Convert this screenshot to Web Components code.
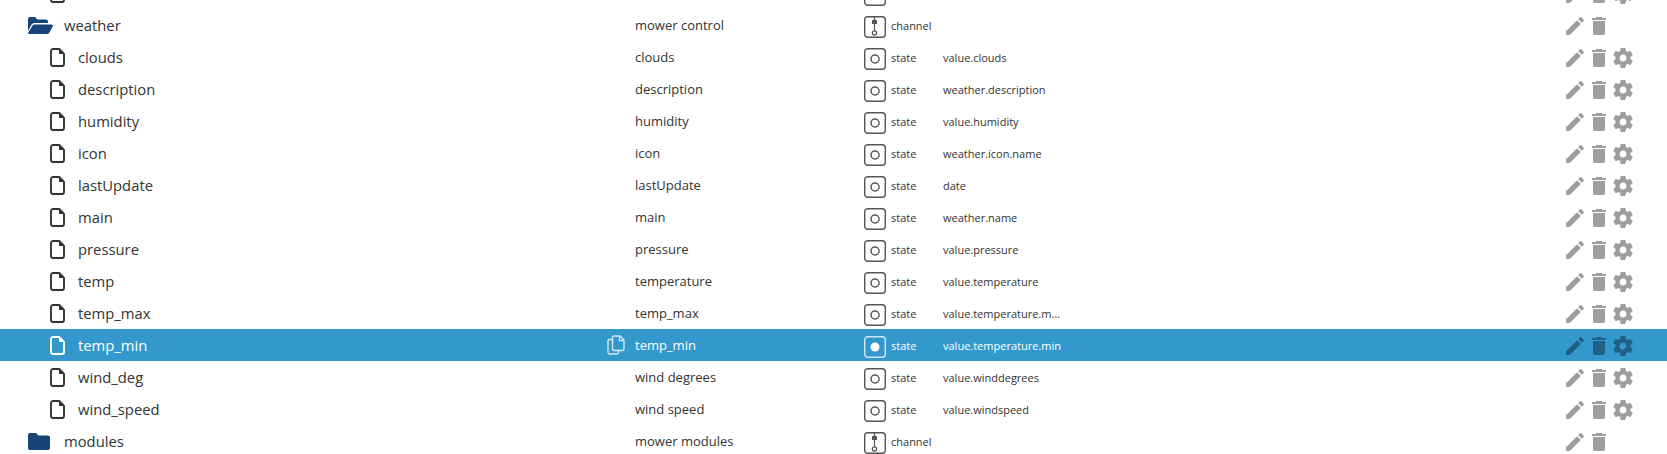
<!DOCTYPE html>
<html><head><meta charset="utf-8">
<style>
html,body{margin:0;padding:0;background:#fff;height:454px;overflow:hidden}
body{font-family:"Open Sans","Noto Sans",sans-serif}
obj-tree{display:block;margin-top:-23px}
</style></head><body>
<obj-tree>
<obj-row kind="file" type="state" short></obj-row>
<obj-row kind="open" label="weather" name="mower control" type="channel"></obj-row>
<obj-row kind="file" label="clouds" name="clouds" type="state" role="value.clouds"></obj-row>
<obj-row kind="file" label="description" name="description" type="state" role="weather.description"></obj-row>
<obj-row kind="file" label="humidity" name="humidity" type="state" role="value.humidity"></obj-row>
<obj-row kind="file" label="icon" name="icon" type="state" role="weather.icon.name"></obj-row>
<obj-row kind="file" label="lastUpdate" name="lastUpdate" type="state" role="date"></obj-row>
<obj-row kind="file" label="main" name="main" type="state" role="weather.name"></obj-row>
<obj-row kind="file" label="pressure" name="pressure" type="state" role="value.pressure"></obj-row>
<obj-row kind="file" label="temp" name="temperature" type="state" role="value.temperature"></obj-row>
<obj-row kind="file" label="temp_max" name="temp_max" type="state" role="value.temperature.max"></obj-row>
<obj-row kind="file" label="temp_min" name="temp_min" type="state" role="value.temperature.min" selected></obj-row>
<obj-row kind="file" label="wind_deg" name="wind degrees" type="state" role="value.winddegrees"></obj-row>
<obj-row kind="file" label="wind_speed" name="wind speed" type="state" role="value.windspeed"></obj-row>
<obj-row kind="closed" label="modules" name="mower modules" type="channel"></obj-row>
</obj-tree>
<script>
const ICONS={
 file:`<svg width="15" height="19" viewBox="0 0 15 19"><path d="M3 1H9.2L14 5.8V16a2 2 0 0 1-2 2H3a2 2 0 0 1-2-2V3a2 2 0 0 1 2-2Z" fill="none" stroke="currentColor" stroke-width="1.9"/><path d="M9 1V6H14Z" fill="currentColor"/></svg>`,
 open:`<svg width="25" height="17" viewBox="0 0 25 17"><path d="M0 14V2a2 2 0 0 1 2-2h5l2.5 2.5H18a2 2 0 0 1 2 2V6H6.5A3.5 3.5 0 0 0 3.3 8Z" fill="currentColor"/><path d="M1 17a1 1 0 0 1-.6-1.5L4.6 8.6A2 2 0 0 1 6.4 7.600H23.500a1.300 1.300 0 0 1 1.200 2l-3.600 6.300A2 2 0 0 1 19.300 17Z" fill="currentColor"/></svg>`,
 closed:`<svg width="22" height="17" viewBox="0 0 22 17"><path d="M0 2a2 2 0 0 1 2-2h6l2.500 2.500H20a2 2 0 0 1 2 2V15a2 2 0 0 1-2 2H2a2 2 0 0 1-2-2Z" fill="currentColor"/></svg>`,
 edit:`<svg width="24" height="24" viewBox="0 0 24 24"><path fill="currentColor" d="M3 17.25V21h3.75L17.81 9.94l-3.75-3.75L3 17.25zM20.71 7.04c.39-.39.39-1.020 0-1.410l-2.340-2.340c-.39-.39-1.020-.39-1.410 0l-1.830 1.830 3.750 3.750 1.830-1.830z"/></svg>`,
 del:`<svg width="24" height="24" viewBox="0 0 24 24"><path fill="currentColor" d="M6 19c0 1.100.9 2 2 2h8c1.100 0 2-.9 2-2V7H6v12zM19 4h-3.500l-1-1h-5l-1 1H5v2h14V4z"/></svg>`,
 gear:`<svg width="24" height="24" viewBox="0 0 24 24"><path fill="currentColor" d="M19.430 12.980c.04-.32.07-.64.07-.98s-.03-.66-.07-.98l2.110-1.650c.19-.15.24-.42.12-.64l-2-3.460c-.12-.22-.39-.3-.61-.22l-2.490 1c-.52-.4-1.080-.73-1.690-.98l-.38-2.650C14.460 2.180 14.250 2 14 2h-4c-.25 0-.46.18-.49.42l-.38 2.650c-.61.25-1.170.59-1.690.98l-2.490-1c-.23-.09-.49 0-.61.22l-2 3.460c-.13.22-.07.49.12.64l2.110 1.650c-.04.32-.07.65-.07.98s.03.66.07.98l-2.110 1.650c-.19.15-.24.42-.12.64l2 3.460c.12.22.39.3.61.22l2.490-1c.52.4 1.080.73 1.690.98l.38 2.650c.03.24.24.42.49.42h4c.25 0 .46-.18.49-.42l.38-2.650c.61-.25 1.170-.59 1.690-.98l2.490 1c.23.09.49 0 .61-.22l2-3.460c.12-.22.07-.49-.12-.64l-2.110-1.650zM12 15.500c-1.930 0-3.500-1.570-3.500-3.500s1.570-3.500 3.500-3.500 3.500 1.570 3.500 3.500-1.570 3.500-3.500 3.500z"/></svg>`,
 copy:`<svg width="18" height="20" viewBox="0 0 18 20" fill="none" stroke="currentColor" stroke-width="1.300"><path d="M7 1h6l4 4v9a1.500 1.500 0 0 1-1.500 1.500H7A1.500 1.500 0 0 1 5.500 14V2.500A1.500 1.500 0 0 1 7 1Z"/><path d="M12.500 1v4.500H17"/><path d="M5.500 4.500H2.500A1.500 1.500 0 0 0 1 6v11.500A1.500 1.500 0 0 0 2.500 19H10a1.500 1.500 0 0 0 1.500-1.500v-2"/></svg>`
};
const tpl=document.createElement('template');
tpl.innerHTML=`<style>
:host{display:grid;grid-template-columns:607px 28px 229px 27px 52px 120px 1fr 104px;align-items:center;height:32px;color:#333}
:host([selected]){background:#39c;color:#fff}
.tree{display:flex;align-items:center;min-width:0}
:host([kind=file]) .tree{padding-left:50px}
:host(:not([kind=file])) .tree{padding-left:28px}
.ticon{display:flex;flex:none;color:#333}
:host([kind=open]) .ticon,:host([kind=closed]) .ticon{color:#164477}
:host([selected]) .ticon{color:#fff}
.label{font-size:14.800px;white-space:nowrap;color:#333}
:host([kind=file]) .label{margin-left:13px}
:host([kind=open]) .label{margin-left:11px}
:host([kind=closed]) .label{margin-left:14px}
:host([selected]) .label{color:#fff}
.copy{display:none;color:#d6ebf5}
:host([selected]) .copy{display:flex}
.name{font-size:13px;white-space:nowrap}
.tbox{width:22px;height:22px;display:block;color:#555;margin-top:4px}
:host([selected]) .tbox{color:#cfe6f2}
.type{font-size:11px;white-space:nowrap;margin-top:1px}
.role{font-size:11px;white-space:nowrap;overflow:hidden;text-overflow:ellipsis;margin-top:1px}
.actions{display:flex;color:#9e9e9e;margin-top:2px}
:host([selected]) .actions{color:#205f88}
.actions span{display:flex;width:24px;height:24px}
</style>
<div class="tree"><span class="ticon"></span><span class="label"></span></div>
<div class="copy"></div><div class="name" style="grid-column:3"></div>
<svg class="tbox" viewBox="0 0 22 22" style="grid-column:4"></svg>
<div class="type"></div><div class="role"></div><div></div>
<div class="actions"></div>`;
class ObjRow extends HTMLElement{
 connectedCallback(){
  const s=this.attachShadow({mode:'open'});s.append(tpl.content.cloneNode(true));
  const g=n=>this.getAttribute(n)||'',q=x=>s.querySelector(x);
  q('.ticon').innerHTML=ICONS[g('kind')];
  q('.label').textContent=g('label');q('.name').textContent=g('name');
  q('.type').textContent=this.hasAttribute('short')?'':g('type');q('.role').textContent=g('role');
  q('.copy').innerHTML=ICONS.copy;
  const ch=g('type')==='channel';
  const sel=this.hasAttribute('selected');
  q('.tbox').innerHTML=`<rect x=".7" y=".7" width="20.600" height="20.600" rx="3" fill="none" stroke="currentColor" stroke-width="1.400"/>`+
   (ch?`<path d="M10.500 1v13.500" stroke="currentColor" stroke-width="1.200"/><rect x="8" y="4" width="5" height="4" fill="currentColor"/><circle cx="10.500" cy="17" r="2.100" fill="none" stroke="currentColor" stroke-width="1.300"/>`
      :(sel?`<circle cx="11" cy="11" r="4.500" fill="#fff"/>`:`<circle cx="11" cy="11" r="4" fill="none" stroke="currentColor" stroke-width="1.500"/>`));
  q('.actions').innerHTML=`<span>${ICONS.edit}</span><span>${ICONS.del}</span>`+(g('kind')==='file'?`<span>${ICONS.gear}</span>`:'');
 }
}
customElements.define('obj-row',ObjRow);
class ObjTree extends HTMLElement{
 constructor(){super();this.attachShadow({mode:'open'}).innerHTML='<style>:host{display:block}</style><slot></slot>';}
}
customElements.define('obj-tree',ObjTree);
</script>
</body></html>
